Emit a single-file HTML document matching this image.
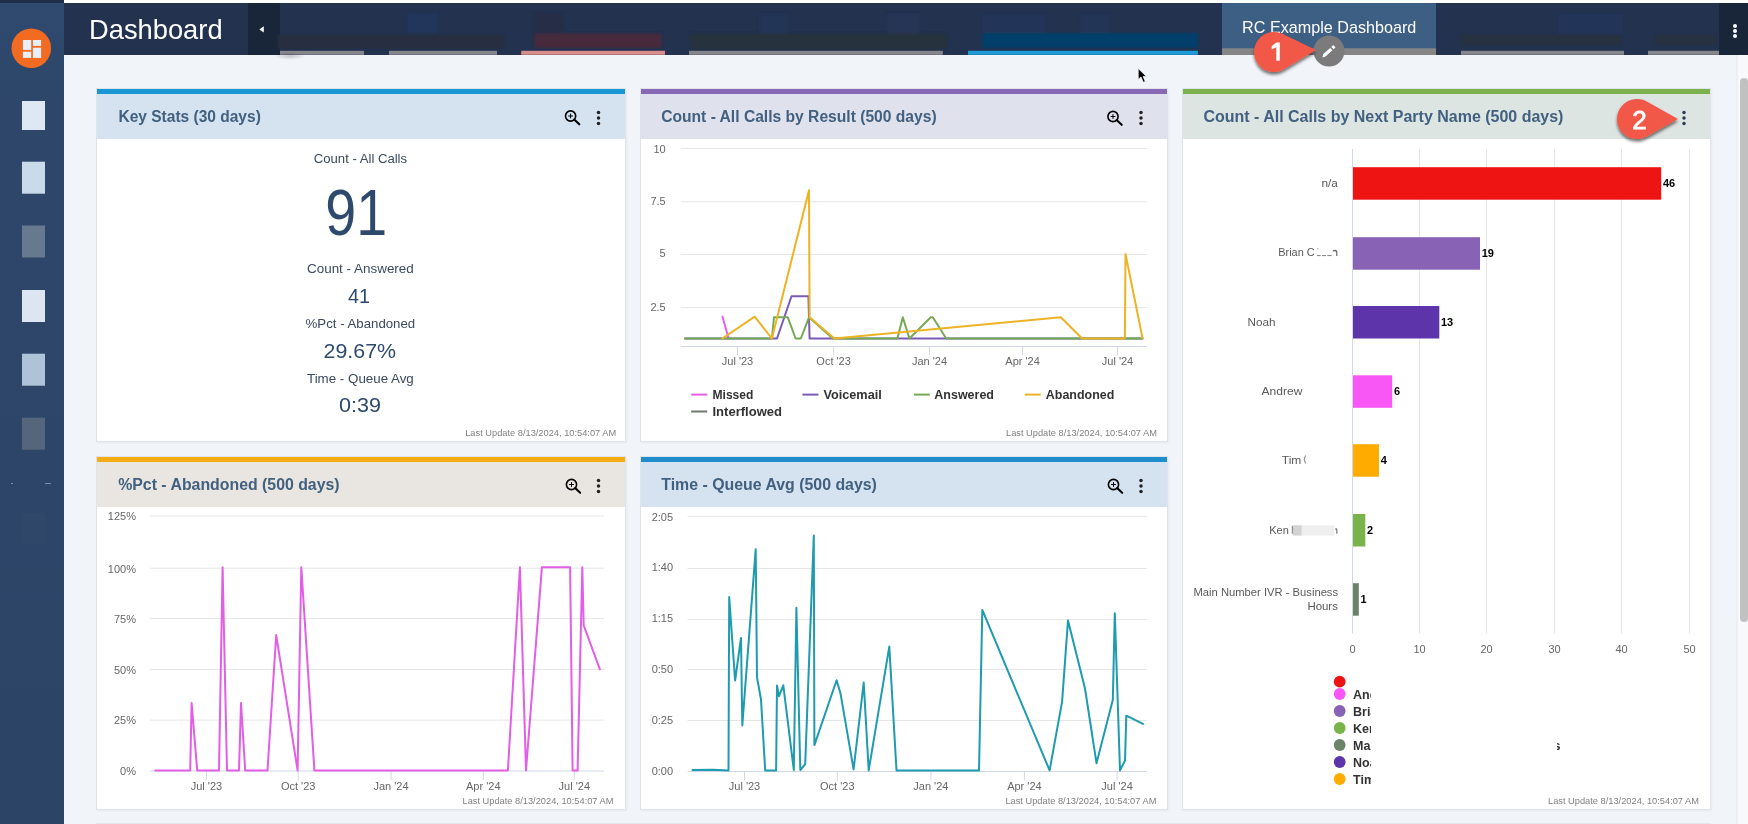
<!DOCTYPE html>
<html><head><meta charset="utf-8"><title>Dashboard</title>
<style>
html,body{margin:0;padding:0;}
body{width:1748px;height:824px;overflow:hidden;position:relative;background:#f1f4f9;font-family:"Liberation Sans",sans-serif;}
.abs{position:absolute;}
#topstrip{left:0;top:0;width:1748px;height:3px;background:#fff;}
#side{left:0;top:0;width:64px;height:824px;background:linear-gradient(180deg,#1f2f49 0,#1f2f49 3px,#2f4a6f 3px,#2d4669 120px,#2c4567 824px);}
#hdr{left:64px;top:3px;width:1684px;height:52px;background:#22324f;}
.panel{position:absolute;background:#fff;border:1px solid #dfe4eb;box-sizing:border-box;box-shadow:1px 1px 2px rgba(30,40,60,0.05);}
.ph{position:absolute;left:0;right:0;height:45px;}
.pbar{position:absolute;left:0;right:0;top:0;height:5px;}
svg{position:absolute;left:0;top:0;will-change:transform;}
</style></head>
<body>
<div class="abs" id="topstrip"></div>
<div class="abs" id="side"></div>
<div class="abs" id="hdr"></div>

<!-- panels -->
<div class="panel" style="left:96px;top:88px;width:530px;height:354px;"><div class="ph" style="top:0;height:50px;background:#d5e2ef"></div><div class="pbar" style="background:#1997d5"></div></div>
<div class="panel" style="left:640px;top:88px;width:528px;height:354px;"><div class="ph" style="top:0;height:50px;background:#dfe1ec"></div><div class="pbar" style="background:#8868b6"></div></div>
<div class="panel" style="left:1182px;top:88px;width:529px;height:722px;"><div class="ph" style="top:0;height:50px;background:#dde5e3"></div><div class="pbar" style="background:#7cb24e"></div></div>
<div class="panel" style="left:96px;top:456px;width:530px;height:354px;"><div class="ph" style="top:0;height:50px;background:#e9e6e1"></div><div class="pbar" style="background:#f4ab14"></div></div>
<div class="panel" style="left:640px;top:456px;width:528px;height:354px;"><div class="ph" style="top:0;height:50px;background:#d5e2ef"></div><div class="pbar" style="background:#1f8ccb"></div></div>

<svg width="1748" height="824" viewBox="0 0 1748 824" font-family="Liberation Sans, sans-serif">
<circle cx="31.3" cy="48.2" r="19.8" fill="#f26b21"/>
<rect x="22.9" y="40" width="8.3" height="9.9" fill="#e9eff8"/>
<rect x="32.9" y="40" width="8.2" height="5.9" fill="#e9eff8"/>
<rect x="22.9" y="51.7" width="8.3" height="6.2" fill="#e9eff8"/>
<rect x="32.9" y="47.7" width="8.2" height="10.2" fill="#e9eff8"/>
<rect x="22" y="101" width="23" height="29" fill="#dde8f3"/>
<rect x="22" y="161.7" width="23" height="32" fill="#c9dbeb"/>
<rect x="22" y="225.5" width="23" height="32" fill="#66798f"/>
<rect x="22" y="290" width="23" height="32" fill="#dde5f1"/>
<rect x="22" y="353.7" width="23" height="32" fill="#aec3d8"/>
<rect x="22" y="417.7" width="23" height="32" fill="#55667c"/>
<rect x="22" y="513" width="23" height="31" fill="#2f486a"/>
<rect x="11" y="483" width="2" height="1" fill="#8090a8"/><rect x="45" y="483" width="6" height="1" fill="#8090a8"/>
<text x="89" y="39.2" font-size="27.5" fill="#ffffff" textLength="133.6" lengthAdjust="spacingAndGlyphs" >Dashboard</text>
<rect x="248" y="3" width="32" height="52" fill="#19263a"/>
<polygon points="259.3,29.4 263.8,26.2 263.8,32.6" fill="#ffffff"/>
<defs><filter id="bl" x="-10%" y="-50%" width="120%" height="200%"><feGaussianBlur stdDeviation="1.2"/></filter></defs><g filter="url(#bl)">
<rect x="406.6" y="13.6" width="31.399999999999977" height="19.4" fill="#24355a"/>
<rect x="534" y="13.6" width="29" height="20.0" fill="#252f47"/>
<rect x="758.6" y="13.6" width="30.0" height="20.0" fill="#233456"/>
<rect x="887" y="13.6" width="32" height="20.0" fill="#253456"/>
<rect x="982" y="13.9" width="64" height="19.300000000000004" fill="#243558"/>
<rect x="1080" y="13.9" width="30" height="19.300000000000004" fill="#233456"/>
<rect x="1558" y="14" width="65" height="20" fill="#233558"/>
<rect x="278" y="34.3" width="226" height="14.5" fill="#272f3f"/>
<rect x="534.3" y="33.6" width="127.3" height="14.3" fill="#472a3b"/>
<rect x="690" y="33.6" width="257" height="15.7" fill="#28313e"/>
<rect x="982.4" y="33.2" width="215.5" height="14.7" fill="#053f6b"/>
<rect x="1461" y="34.7" width="160" height="10.3" fill="#283140"/>
<rect x="1655" y="34.7" width="62" height="10.3" fill="#283140"/>
</g>
<rect x="280" y="50.8" width="84" height="4" fill="#86878d"/>
<rect x="389" y="50.8" width="108" height="4" fill="#86878d"/>
<rect x="521.2" y="50.8" width="143.79999999999995" height="4" fill="#d98c8c"/>
<rect x="689" y="50.8" width="253.79999999999995" height="4" fill="#86878d"/>
<rect x="968" y="50.8" width="229.9000000000001" height="4" fill="#1f9cd8"/>
<rect x="1461" y="50.8" width="163" height="4" fill="#86878d"/>
<rect x="1648" y="50.8" width="71" height="4" fill="#86878d"/>
<rect x="1222" y="3" width="214" height="52" fill="#3d5f83"/>
<rect x="1222" y="48.3" width="214" height="6.7" fill="#858585"/>
<text x="1242.1" y="32.8" font-size="17" fill="#ffffff" textLength="174.2" lengthAdjust="spacingAndGlyphs" >RC Example Dashboard</text>
<rect x="1719" y="3" width="29" height="52" fill="#19263a"/>
<circle cx="1735" cy="25.9" r="2" fill="#ffffff"/>
<circle cx="1735" cy="31" r="2" fill="#ffffff"/>
<circle cx="1735" cy="36" r="2" fill="#ffffff"/>
<defs><radialGradient id="tsh"><stop offset="0" stop-color="#000" stop-opacity="0.18"/><stop offset="1" stop-color="#000" stop-opacity="0"/></radialGradient></defs><ellipse cx="290" cy="56" rx="16" ry="4" fill="url(#tsh)"/>
<text x="118.5" y="121.6" font-size="16" fill="#42607f" font-weight="bold" textLength="142.3" lengthAdjust="spacingAndGlyphs" >Key Stats (30 days)</text>
<text x="661.2" y="122.3" font-size="16" fill="#42607f" font-weight="bold" textLength="275.4" lengthAdjust="spacingAndGlyphs" >Count - All Calls by Result (500 days)</text>
<text x="1203.4" y="122.2" font-size="16" fill="#42607f" font-weight="bold" textLength="360" lengthAdjust="spacingAndGlyphs" >Count - All Calls by Next Party Name (500 days)</text>
<text x="118.2" y="489.9" font-size="16" fill="#42607f" font-weight="bold" textLength="221.4" lengthAdjust="spacingAndGlyphs" >%Pct - Abandoned (500 days)</text>
<text x="661.3" y="489.7" font-size="16" fill="#42607f" font-weight="bold" textLength="215.6" lengthAdjust="spacingAndGlyphs" >Time - Queue Avg (500 days)</text>
<g stroke="#000" fill="none"><circle cx="570.6" cy="116" r="5.1" stroke-width="1.6"/><line x1="574.2" y1="119.6" x2="579.3000000000001" y2="124.3" stroke-width="2.1" stroke-linecap="round"/><line x1="568.2" y1="116" x2="573.0" y2="116" stroke-width="1"/><line x1="570.6" y1="113.6" x2="570.6" y2="118.4" stroke-width="1"/></g>
<circle cx="598.5" cy="112.5" r="1.75" fill="#222"/>
<circle cx="598.5" cy="118" r="1.75" fill="#222"/>
<circle cx="598.5" cy="123.5" r="1.75" fill="#222"/>
<g stroke="#000" fill="none"><circle cx="1113" cy="116.5" r="5.1" stroke-width="1.6"/><line x1="1116.6" y1="120.1" x2="1121.7" y2="124.8" stroke-width="2.1" stroke-linecap="round"/><line x1="1110.6" y1="116.5" x2="1115.4" y2="116.5" stroke-width="1"/><line x1="1113" y1="114.1" x2="1113" y2="118.9" stroke-width="1"/></g>
<circle cx="1141" cy="112.5" r="1.75" fill="#222"/>
<circle cx="1141" cy="118" r="1.75" fill="#222"/>
<circle cx="1141" cy="123.5" r="1.75" fill="#222"/>
<circle cx="1684" cy="112.5" r="1.75" fill="#2a3a55"/>
<circle cx="1684" cy="118" r="1.75" fill="#2a3a55"/>
<circle cx="1684" cy="123.5" r="1.75" fill="#2a3a55"/>
<g stroke="#000" fill="none"><circle cx="571.5" cy="484.5" r="5.1" stroke-width="1.6"/><line x1="575.1" y1="488.1" x2="580.2" y2="492.8" stroke-width="2.1" stroke-linecap="round"/><line x1="569.1" y1="484.5" x2="573.9" y2="484.5" stroke-width="1"/><line x1="571.5" y1="482.1" x2="571.5" y2="486.9" stroke-width="1"/></g>
<circle cx="598.5" cy="480.5" r="1.75" fill="#222"/>
<circle cx="598.5" cy="486" r="1.75" fill="#222"/>
<circle cx="598.5" cy="491.5" r="1.75" fill="#222"/>
<g stroke="#000" fill="none"><circle cx="1113.5" cy="484.5" r="5.1" stroke-width="1.6"/><line x1="1117.1" y1="488.1" x2="1122.2" y2="492.8" stroke-width="2.1" stroke-linecap="round"/><line x1="1111.1" y1="484.5" x2="1115.9" y2="484.5" stroke-width="1"/><line x1="1113.5" y1="482.1" x2="1113.5" y2="486.9" stroke-width="1"/></g>
<circle cx="1141" cy="480.5" r="1.75" fill="#222"/>
<circle cx="1141" cy="486" r="1.75" fill="#222"/>
<circle cx="1141" cy="491.5" r="1.75" fill="#222"/>
<text x="313.8" y="162.9" font-size="13" fill="#3b4a5e" textLength="93.3" lengthAdjust="spacingAndGlyphs" >Count - All Calls</text>
<text x="325.3" y="235.4" font-size="64" fill="#2d4a6d" textLength="61.8" lengthAdjust="spacingAndGlyphs" >91</text>
<text x="307" y="273" font-size="13" fill="#3b4a5e" textLength="106.8" lengthAdjust="spacingAndGlyphs" >Count - Answered</text>
<text x="348" y="303" font-size="21" fill="#2d4a6d" textLength="22" lengthAdjust="spacingAndGlyphs" >41</text>
<text x="305.6" y="328.1" font-size="13" fill="#3b4a5e" textLength="109.6" lengthAdjust="spacingAndGlyphs" >%Pct - Abandoned</text>
<text x="323.6" y="358.1" font-size="21" fill="#2d4a6d" textLength="72.5" lengthAdjust="spacingAndGlyphs" >29.67%</text>
<text x="307" y="383.2" font-size="13" fill="#3b4a5e" textLength="106.8" lengthAdjust="spacingAndGlyphs" >Time - Queue Avg</text>
<text x="339" y="412.2" font-size="21" fill="#2d4a6d" textLength="42" lengthAdjust="spacingAndGlyphs" >0:39</text>
<text x="616.2" y="436" font-size="9.2" fill="#808080" text-anchor="end" textLength="151" lengthAdjust="spacingAndGlyphs" >Last Update 8/13/2024, 10:54:07 AM</text>
<text x="1157" y="436.3" font-size="9.2" fill="#808080" text-anchor="end" textLength="151" lengthAdjust="spacingAndGlyphs" >Last Update 8/13/2024, 10:54:07 AM</text>
<text x="1699" y="803.7" font-size="9.2" fill="#808080" text-anchor="end" textLength="151" lengthAdjust="spacingAndGlyphs" >Last Update 8/13/2024, 10:54:07 AM</text>
<text x="613.5" y="803.5" font-size="9.2" fill="#808080" text-anchor="end" textLength="151" lengthAdjust="spacingAndGlyphs" >Last Update 8/13/2024, 10:54:07 AM</text>
<text x="1156.4" y="804" font-size="9.2" fill="#808080" text-anchor="end" textLength="151" lengthAdjust="spacingAndGlyphs" >Last Update 8/13/2024, 10:54:07 AM</text>
<rect x="681" y="148.0" width="466" height="1" fill="#e6e6e6"/>
<rect x="681" y="201.3" width="466" height="1" fill="#e6e6e6"/>
<rect x="681" y="254.0" width="466" height="1" fill="#e6e6e6"/>
<rect x="681" y="307.0" width="466" height="1" fill="#e6e6e6"/>
<text x="665.7" y="152.7" font-size="11" fill="#666666" text-anchor="end" >10</text>
<text x="665.7" y="205" font-size="11" fill="#666666" text-anchor="end" >7.5</text>
<text x="665.7" y="257.4" font-size="11" fill="#666666" text-anchor="end" >5</text>
<text x="665.7" y="310.8" font-size="11" fill="#666666" text-anchor="end" >2.5</text>
<rect x="681" y="346" width="466" height="1" fill="#d0d8e8"/>
<rect x="737.0" y="346.5" width="1" height="9" fill="#d0d8e8"/>
<text x="737.5" y="365" font-size="11" fill="#666666" text-anchor="middle" >Jul '23</text>
<rect x="833.1" y="346.5" width="1" height="9" fill="#d0d8e8"/>
<text x="833.6" y="365" font-size="11" fill="#666666" text-anchor="middle" >Oct '23</text>
<rect x="929.0" y="346.5" width="1" height="9" fill="#d0d8e8"/>
<text x="929.5" y="365" font-size="11" fill="#666666" text-anchor="middle" >Jan '24</text>
<rect x="1022.1" y="346.5" width="1" height="9" fill="#d0d8e8"/>
<text x="1022.6" y="365" font-size="11" fill="#666666" text-anchor="middle" >Apr '24</text>
<rect x="1117.0" y="346.5" width="1" height="9" fill="#d0d8e8"/>
<text x="1117.5" y="365" font-size="11" fill="#666666" text-anchor="middle" >Jul '24</text>
<polyline points="722.5,316.8 728.3,337.5" fill="none" stroke="#e75fe8" stroke-width="2" stroke-linejoin="round" stroke-linecap="round" />
<polyline points="685,338.5 777,338.5 791.5,296.2 808.4,296.2 809.6,338.5 1142.6,338.5" fill="none" stroke="#7a5bb5" stroke-width="2" stroke-linejoin="round" stroke-linecap="round" />
<polyline points="685.2,338.5 771.9,338.5 774,317.3 787.8,317.3 795.6,338.5 800.8,338.5 809,317.3 832.8,338.5 897.4,338.5 902.8,317.2 909.4,338.5 930.8,317.2 932.8,317.2 946.2,338.5 1142.6,338.5" fill="none" stroke="#75a954" stroke-width="2" stroke-linejoin="round" stroke-linecap="round" />
<polyline points="722.3,338.5 754.7,316.7 771.9,338.5 809,190.3 809.6,317.3 834.4,338.5 1060.8,317.2 1082.1,338.5 1124.9,338.5 1125.5,254 1142.6,338.5" fill="none" stroke="#edb324" stroke-width="2" stroke-linejoin="round" stroke-linecap="round" />
<rect x="691.2" y="393.6" width="16" height="2" fill="#e75fe8"/>
<text x="712.5" y="399.1" font-size="12.5" fill="#333333" font-weight="bold" textLength="40.9" lengthAdjust="spacingAndGlyphs" >Missed</text>
<rect x="802.4" y="393.6" width="16" height="2" fill="#7a5bb5"/>
<text x="823.4" y="399.1" font-size="12.5" fill="#333333" font-weight="bold" textLength="58.4" lengthAdjust="spacingAndGlyphs" >Voicemail</text>
<rect x="913.9" y="393.6" width="16" height="2" fill="#75a954"/>
<text x="934.3" y="399.1" font-size="12.5" fill="#333333" font-weight="bold" textLength="59.7" lengthAdjust="spacingAndGlyphs" >Answered</text>
<rect x="1024.8" y="393.6" width="16" height="2" fill="#edb324"/>
<text x="1045.8" y="399.1" font-size="12.5" fill="#333333" font-weight="bold" textLength="68.5" lengthAdjust="spacingAndGlyphs" >Abandoned</text>
<rect x="691.2" y="410.5" width="16" height="2" fill="#6e7b6c"/>
<text x="712.5" y="416.0" font-size="12.5" fill="#333333" font-weight="bold" textLength="69.5" lengthAdjust="spacingAndGlyphs" >Interflowed</text>
<rect x="150" y="515.5" width="454" height="1" fill="#e6e6e6"/>
<text x="136" y="520.3" font-size="11" fill="#666666" text-anchor="end" >125%</text>
<rect x="150" y="567.7" width="454" height="1" fill="#e6e6e6"/>
<text x="136" y="572.5" font-size="11" fill="#666666" text-anchor="end" >100%</text>
<rect x="150" y="618.1" width="454" height="1" fill="#e6e6e6"/>
<text x="136" y="622.9" font-size="11" fill="#666666" text-anchor="end" >75%</text>
<rect x="150" y="668.9" width="454" height="1" fill="#e6e6e6"/>
<text x="136" y="673.6999999999999" font-size="11" fill="#666666" text-anchor="end" >50%</text>
<rect x="150" y="719.6" width="454" height="1" fill="#e6e6e6"/>
<text x="136" y="724.4" font-size="11" fill="#666666" text-anchor="end" >25%</text>
<text x="136" y="775.1" font-size="11" fill="#666666" text-anchor="end" >0%</text>
<rect x="150" y="770.5" width="454" height="1" fill="#d0d8e8"/>
<rect x="205.9" y="771" width="1" height="9" fill="#d0d8e8"/>
<text x="206.4" y="789.5" font-size="11" fill="#666666" text-anchor="middle" >Jul '23</text>
<rect x="297.7" y="771" width="1" height="9" fill="#d0d8e8"/>
<text x="298.2" y="789.5" font-size="11" fill="#666666" text-anchor="middle" >Oct '23</text>
<rect x="390.5" y="771" width="1" height="9" fill="#d0d8e8"/>
<text x="391" y="789.5" font-size="11" fill="#666666" text-anchor="middle" >Jan '24</text>
<rect x="482.8" y="771" width="1" height="9" fill="#d0d8e8"/>
<text x="483.3" y="789.5" font-size="11" fill="#666666" text-anchor="middle" >Apr '24</text>
<rect x="573.8" y="771" width="1" height="9" fill="#d0d8e8"/>
<text x="574.3" y="789.5" font-size="11" fill="#666666" text-anchor="middle" >Jul '24</text>
<polyline points="155.3,770.4 190.2,770.4 191.6,702.9 197.2,770.4 219,770.4 222.6,567.3 227,770.4 239,770.4 241,702.9 245.2,770.4 267.5,770.4 276.2,635.1 297.6,770.4 301.3,567.3 314.4,770.4 507.9,770.4 519.9,567.3 526,770.4 541.9,567.3 570.1,567.3 572.6,770.4 577.6,770.4 582.3,567.3 583.7,625.3 599.9,669.4" fill="none" stroke="#e35ee6" stroke-width="2" stroke-linejoin="round" stroke-linecap="round" />
<rect x="687.5" y="515.8" width="459.5" height="1" fill="#e6e6e6"/>
<text x="673.1" y="520.6" font-size="11" fill="#666666" text-anchor="end" >2:05</text>
<rect x="687.5" y="568.0" width="459.5" height="1" fill="#e6e6e6"/>
<text x="673.1" y="570.9" font-size="11" fill="#666666" text-anchor="end" >1:40</text>
<rect x="687.5" y="619.0" width="459.5" height="1" fill="#e6e6e6"/>
<text x="673.1" y="621.9" font-size="11" fill="#666666" text-anchor="end" >1:15</text>
<rect x="687.5" y="668.9" width="459.5" height="1" fill="#e6e6e6"/>
<text x="673.1" y="672.9" font-size="11" fill="#666666" text-anchor="end" >0:50</text>
<rect x="687.5" y="720.0" width="459.5" height="1" fill="#e6e6e6"/>
<text x="673.1" y="723.9" font-size="11" fill="#666666" text-anchor="end" >0:25</text>
<text x="673.1" y="774.7" font-size="11" fill="#666666" text-anchor="end" >0:00</text>
<rect x="687.5" y="771" width="459.5" height="1" fill="#d0d8e8"/>
<rect x="744.0" y="771.5" width="1" height="9" fill="#d0d8e8"/>
<text x="744.5" y="790" font-size="11" fill="#666666" text-anchor="middle" >Jul '23</text>
<rect x="836.8" y="771.5" width="1" height="9" fill="#d0d8e8"/>
<text x="837.3" y="790" font-size="11" fill="#666666" text-anchor="middle" >Oct '23</text>
<rect x="930.4" y="771.5" width="1" height="9" fill="#d0d8e8"/>
<text x="930.9" y="790" font-size="11" fill="#666666" text-anchor="middle" >Jan '24</text>
<rect x="1023.9000000000001" y="771.5" width="1" height="9" fill="#d0d8e8"/>
<text x="1024.4" y="790" font-size="11" fill="#666666" text-anchor="middle" >Apr '24</text>
<rect x="1116.6" y="771.5" width="1" height="9" fill="#d0d8e8"/>
<text x="1117.1" y="790" font-size="11" fill="#666666" text-anchor="middle" >Jul '24</text>
<polyline points="692.5,770 712.8,769.7 728.5,770.5 729.2,596.9 735.1,680.5 741,637.9 742.3,725.4 755.7,549.3 757,677.2 761,699.5 765.2,770.5 776.1,770.5 777,685.4 779,696.2 783.3,685.4 793.8,770 796.4,607.7 800.3,770 805.2,764.1 813.8,535.6 814.4,745.1 836.6,680.3 840.5,693.4 853.6,769.4 863.7,682.6 868.7,770.4 889.3,646.6 896.5,770.4 979,770.4 982.3,609.9 1049.6,770.4 1062.1,701.6 1068,620.4 1085,688.5 1096.5,763.2 1112.8,700 1114.8,613.2 1120,770.4 1125,760.6 1126.3,715.7 1143,723.9" fill="none" stroke="#1f9bb0" stroke-width="2" stroke-linejoin="round" stroke-linecap="round" />
<rect x="1352.0" y="149" width="1" height="484.5" fill="#d0d8e8"/>
<text x="1352.5" y="652.8" font-size="11" fill="#666666" text-anchor="middle" >0</text>
<rect x="1419.0" y="149" width="1" height="484.5" fill="#e6e6e6"/>
<text x="1419.5" y="652.8" font-size="11" fill="#666666" text-anchor="middle" >10</text>
<rect x="1486.0" y="149" width="1" height="484.5" fill="#e6e6e6"/>
<text x="1486.5" y="652.8" font-size="11" fill="#666666" text-anchor="middle" >20</text>
<rect x="1554.0" y="149" width="1" height="484.5" fill="#e6e6e6"/>
<text x="1554.5" y="652.8" font-size="11" fill="#666666" text-anchor="middle" >30</text>
<rect x="1621.0" y="149" width="1" height="484.5" fill="#e6e6e6"/>
<text x="1621.5" y="652.8" font-size="11" fill="#666666" text-anchor="middle" >40</text>
<rect x="1689.0" y="149" width="1" height="484.5" fill="#e6e6e6"/>
<text x="1689.5" y="652.8" font-size="11" fill="#666666" text-anchor="middle" >50</text>
<rect x="1353.0" y="167.2" width="308.20000000000005" height="32.5" fill="#ee1414"/>
<text x="1662.9" y="186.7" font-size="11" fill="#000000" font-weight="bold" >46</text>
<rect x="1353.0" y="237.2" width="127.0" height="32.5" fill="#8862b5"/>
<text x="1481.7" y="256.7" font-size="11" fill="#000000" font-weight="bold" >19</text>
<rect x="1353.0" y="306" width="86.29999999999995" height="32.5" fill="#5d34aa"/>
<text x="1441.0" y="325.5" font-size="11" fill="#000000" font-weight="bold" >13</text>
<rect x="1353.0" y="375.3" width="39.200000000000045" height="32.5" fill="#f957f5"/>
<text x="1393.9" y="394.8" font-size="11" fill="#000000" font-weight="bold" >6</text>
<rect x="1353.0" y="444.2" width="26.0" height="32.5" fill="#ffab00"/>
<text x="1380.7" y="463.7" font-size="11" fill="#000000" font-weight="bold" >4</text>
<rect x="1353.0" y="514" width="12.299999999999955" height="32.5" fill="#78b449"/>
<text x="1367.0" y="533.5" font-size="11" fill="#000000" font-weight="bold" >2</text>
<rect x="1353.0" y="583.2" width="5.7999999999999545" height="32.5" fill="#6b8469"/>
<text x="1360.5" y="602.7" font-size="11" fill="#000000" font-weight="bold" >1</text>
<text x="1321.4" y="187" font-size="11.5" fill="#595959" textLength="16.4" lengthAdjust="spacingAndGlyphs" >n/a</text>
<text x="1278.2" y="256.1" font-size="11.5" fill="#595959" textLength="36.5" lengthAdjust="spacingAndGlyphs" >Brian C</text>
<rect x="1317.2" y="248.3" width="1.2" height="1.2" fill="#aaa"/><rect x="1317" y="255" width="3.6" height="1.1" fill="#8a8a8a"/><rect x="1321.9" y="255" width="4.2" height="1.1" fill="#8a8a8a"/><rect x="1327.3" y="255" width="4.3" height="1.1" fill="#8a8a8a"/>
<path d="M1332.8,250.2 Q1337.4,248.6 1337.4,252.4 L1337.4,256.1 L1336.2,256.1 L1336.2,252.6 Q1336,250.6 1332.8,251.6 Z" fill="#666"/>
<text x="1247.6" y="326.2" font-size="11.5" fill="#595959" textLength="28" lengthAdjust="spacingAndGlyphs" >Noah</text>
<text x="1261.6" y="395.2" font-size="11.5" fill="#595959" textLength="40.8" lengthAdjust="spacingAndGlyphs" >Andrew</text>
<text x="1281.8" y="464.2" font-size="11.5" fill="#595959" textLength="19.5" lengthAdjust="spacingAndGlyphs" >Tim</text>
<path d="M1305.5,455.5 Q1303,459.5 1305.5,463.5" stroke="#777" stroke-width="1" fill="none"/>
<text x="1269.2" y="533.8" font-size="11.5" fill="#595959" textLength="19.6" lengthAdjust="spacingAndGlyphs" >Ken</text>
<rect x="1291.8" y="525.8" width="1" height="8" fill="#777"/>
<rect x="1293" y="525.3" width="8.8" height="10.3" fill="#d3d3d3"/><rect x="1301.8" y="525.3" width="32.5" height="10.3" fill="#efefef"/>
<path d="M1335.2,528.5 Q1337.4,527.5 1337.4,530 L1337.4,533.8 L1336.3,533.8 L1336.3,530.2 Q1336.2,529 1335.2,529.7 Z" fill="#666"/>
<text x="1193.5" y="595.7" font-size="11.5" fill="#595959" textLength="144.6" lengthAdjust="spacingAndGlyphs" >Main Number IVR - Business</text>
<text x="1307.4" y="609.7" font-size="11.5" fill="#595959" textLength="30.5" lengthAdjust="spacingAndGlyphs" >Hours</text>
<defs><clipPath id="lc"><rect x="1300" y="660" width="71" height="140"/></clipPath></defs>
<g clip-path="url(#lc)">
<circle cx="1339.7" cy="681.7" r="5.9" fill="#ee1414"/>
<circle cx="1339.7" cy="694" r="5.9" fill="#f957f5"/>
<text x="1353" y="698.5" font-size="12.5" fill="#333333" font-weight="bold" >Andrew</text>
<circle cx="1339.7" cy="711" r="5.9" fill="#8862b5"/>
<text x="1353" y="715.5" font-size="12.5" fill="#333333" font-weight="bold" >Brian</text>
<circle cx="1339.7" cy="728" r="5.9" fill="#78b449"/>
<text x="1353" y="732.5" font-size="12.5" fill="#333333" font-weight="bold" >Ken</text>
<circle cx="1339.7" cy="745" r="5.9" fill="#6b8469"/>
<text x="1353" y="749.5" font-size="12.5" fill="#333333" font-weight="bold" >Main</text>
<circle cx="1339.7" cy="762" r="5.9" fill="#5d34aa"/>
<text x="1353" y="766.5" font-size="12.5" fill="#333333" font-weight="bold" >Noah</text>
<circle cx="1339.7" cy="779" r="5.9" fill="#ffab00"/>
<text x="1353" y="783.5" font-size="12.5" fill="#333333" font-weight="bold" >Tim</text>
</g>
<defs><clipPath id="sc"><rect x="1557" y="735" width="10" height="20"/></clipPath></defs>
<text x="1553.5" y="749.5" font-size="12.5" fill="#333333" font-weight="bold" clip-path="url(#sc)">s</text>
<defs><filter id="sh" x="-30%" y="-30%" width="160%" height="170%"><feDropShadow dx="0" dy="2.5" stdDeviation="1.6" flood-color="#000" flood-opacity="0.55"/></filter></defs>
<circle cx="1329" cy="51" r="15.5" fill="#7b7b7b"/>
<path d="M1322.4,57.6 L1323.3,54.1 L1330.2,47.9 L1332.4,50.3 L1325.5,56.6 Z" fill="#ffffff"/>
<path d="M1331.3,46.9 L1333.3,45.1 L1335.5,47.5 L1333.5,49.3 Z" fill="#ffffff"/>
<path d="M1316,50 L1284.34,69.12 A20,20 0 1 1 1282.67,33.97 Z" fill="#f25846" filter="url(#sh)"/>
<path d="M1276.3,42.5 L1279.8,42.5 L1279.8,60.7 L1276.3,60.7 L1276.3,47.3 L1271.8,49.6 L1271.6,46.2 Z" fill="#ffffff"/>
<path d="M1678,119 L1646.76,136.46 A20,20 0 1 1 1646.76,101.54 Z" fill="#f25846" filter="url(#sh)"/>
<text x="1639.5" y="129" font-size="26" fill="#ffffff" text-anchor="middle" stroke="#fff" stroke-width="0.8">2</text>
<path d="M1138.2,68.6 L1138.2,79.4 L1141,77 L1143.3,82.3 L1145.3,81.5 L1143.1,76.4 L1146.2,76.2 Z" fill="#000" stroke="#fff" stroke-width="0.7"/>
<rect x="96" y="823" width="1615" height="1" fill="#e2e6ed"/>
<rect x="1736.5" y="55" width="11.5" height="769" fill="#f8f9fb"/><rect x="1736.5" y="55" width="1" height="769" fill="#e4e7ec"/>
<rect x="1740" y="78" width="8" height="544" rx="4" fill="#c1c1c1"/>
</svg>
</body></html>
